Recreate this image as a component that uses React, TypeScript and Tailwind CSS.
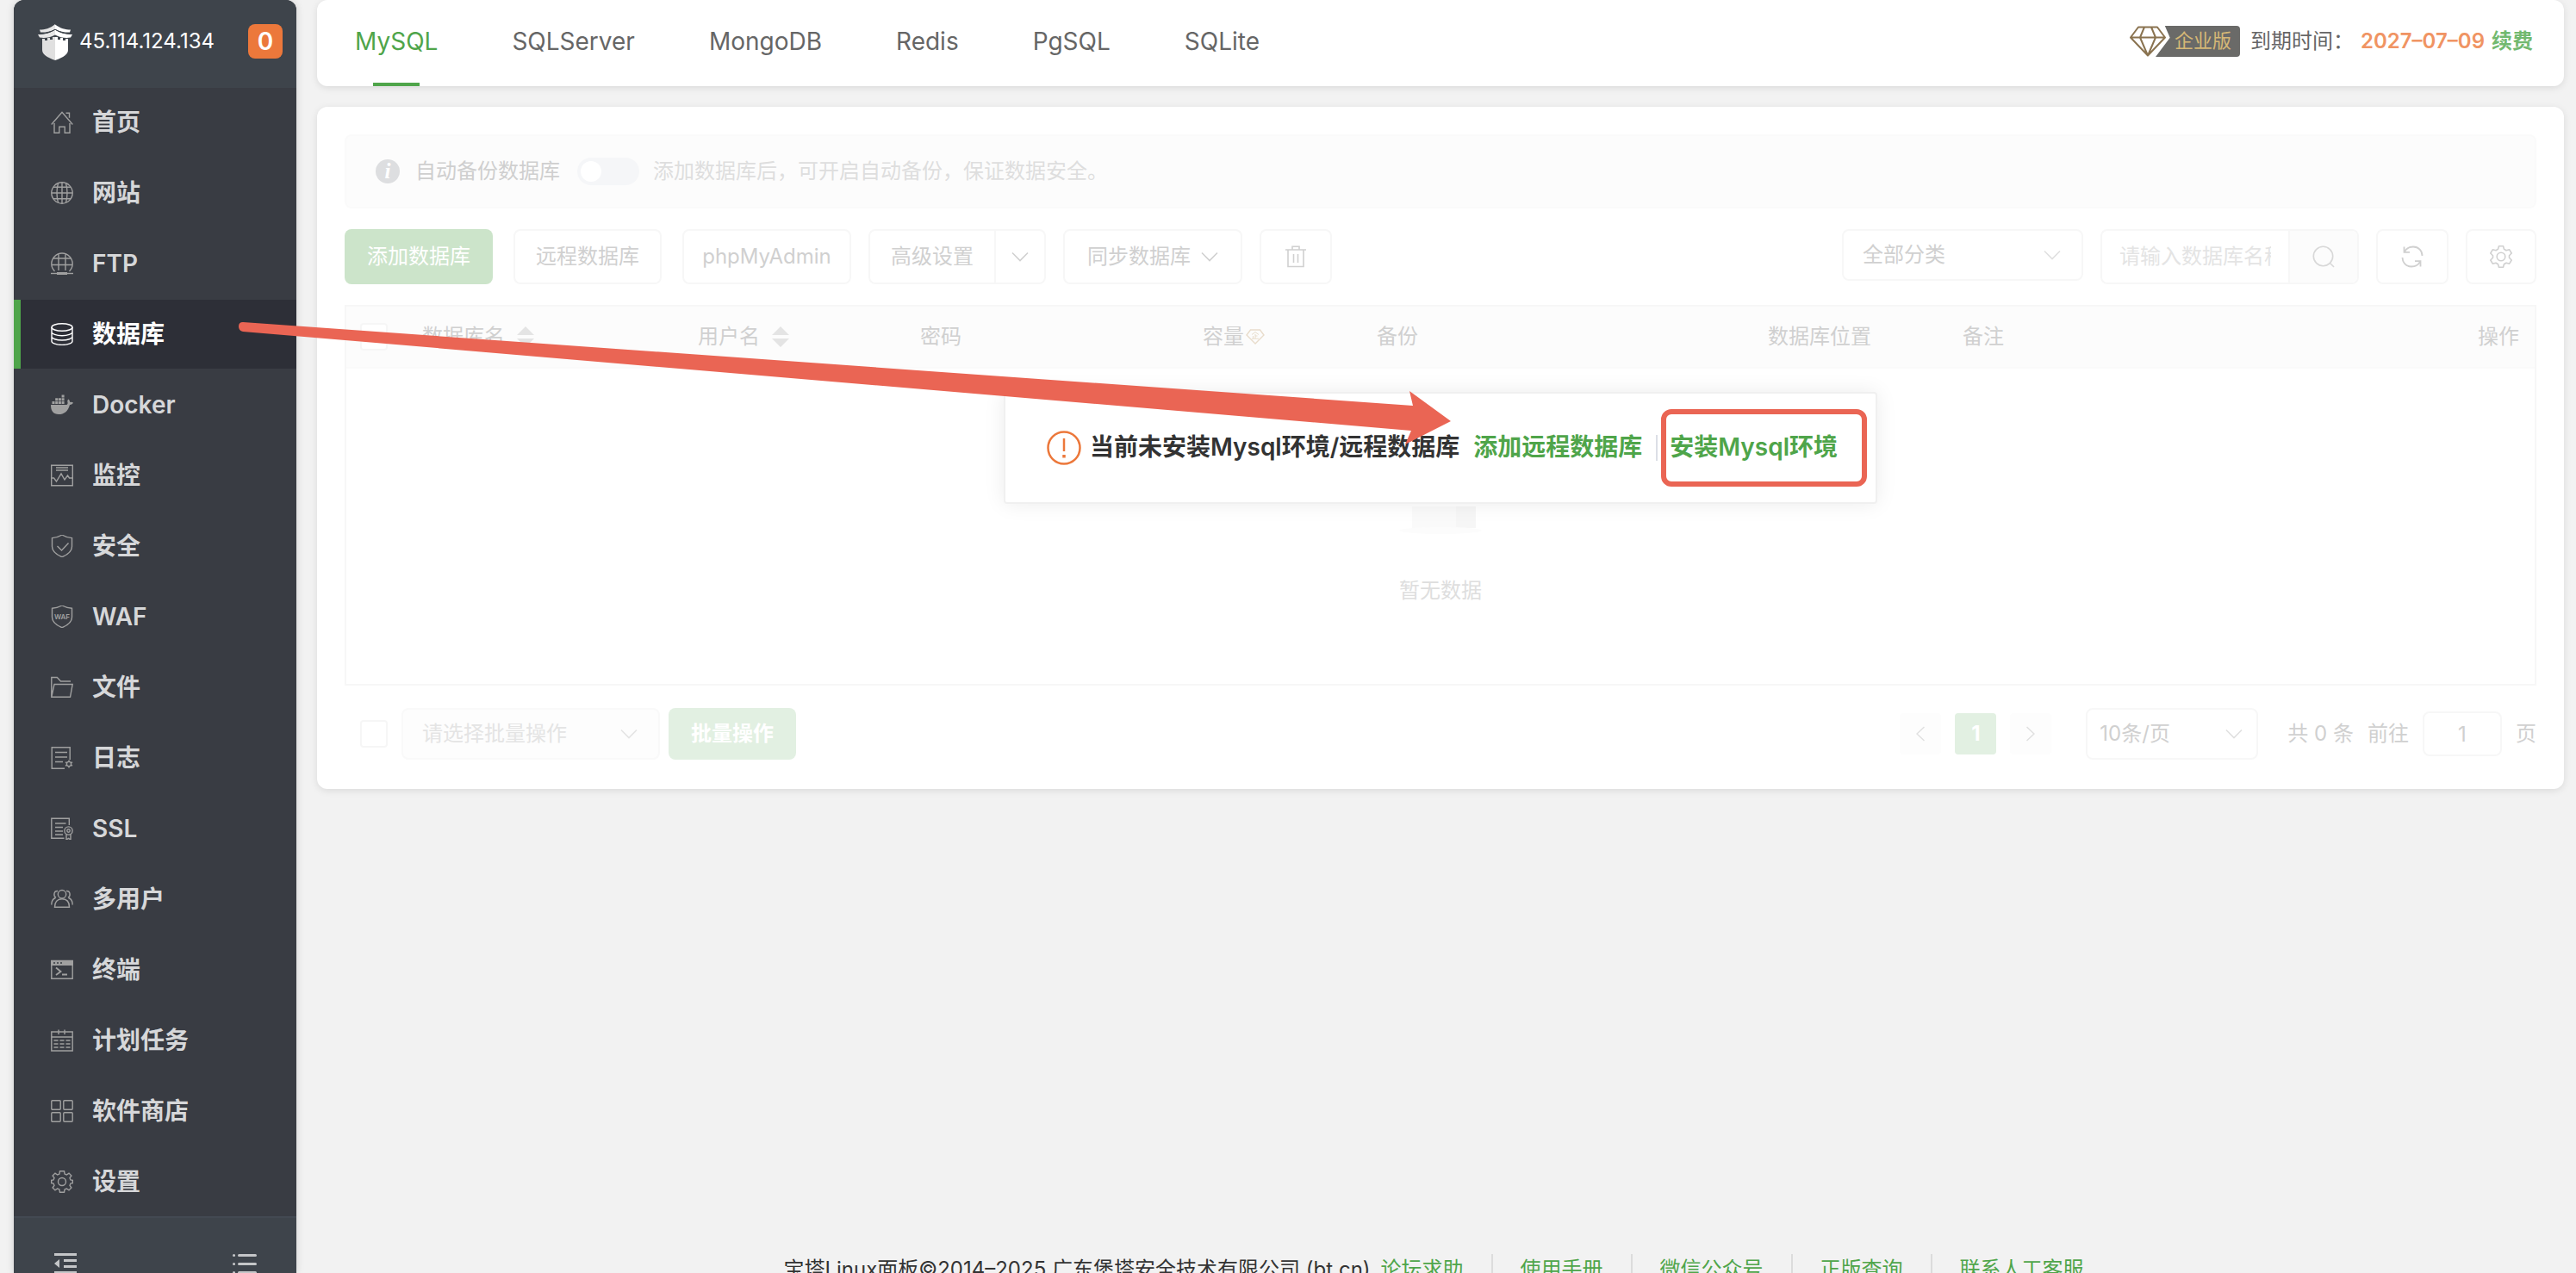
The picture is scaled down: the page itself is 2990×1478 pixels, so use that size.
import React from 'react';
import { clsx } from 'clsx';

interface IconProps {
  className?: string;
}

interface MenuItem {
  label: string;
  icon: React.ReactNode;
  active?: boolean;
}

const tabs = ['MySQL', 'SQLServer', 'MongoDB', 'Redis', 'PgSQL', 'SQLite'];

const footerLinks = ['论坛求助', '使用手册', '微信公众号', '正版查询', '联系人工客服'];

// 26px line icon used in the side menu
const MenuIcon: React.FC<{ children: React.ReactNode }> = ({ children }) => (
  <svg viewBox="0 0 26 26" className="h-[26px] w-[26px] shrink-0" fill="none" stroke="currentColor" strokeWidth="1.4" aria-hidden="true">
    {children}
  </svg>
);

const menu: MenuItem[] = [
  {
    label: '首页',
    icon: (
      <MenuIcon>
        <path d="M.7 15.5 13 1.2l12.3 14.3M17.5 2.2h4v5.6M4 14v11.2h5.8v-7h6.4v7H22V14" />
      </MenuIcon>
    ),
  },
  {
    label: '网站',
    icon: (
      <MenuIcon>
        <circle cx="13" cy="13" r="12.2" />
        <path d="M13 .8v24.4M.8 13h24.4M3 6.3h20M3 19.7h20M8.5 1.8q-3 11.2 0 22.4M17.5 1.8q3 11.2 0 22.4" />
      </MenuIcon>
    ),
  },
  {
    label: 'FTP',
    icon: (
      <MenuIcon>
        <path d="M4.5 22A12.2 12.2 0 1 1 21.500 22M2.500 7h21M1 14.500h24M9 1.500V21M17 1.500V21" />
        <path d="M0 24.500h26" />
        <path d="M7 24.500h12" strokeWidth="3" />
      </MenuIcon>
    ),
  },
  {
    label: '数据库',
    active: true,
    icon: (
      <MenuIcon>
        <ellipse cx="13" cy="5" rx="12" ry="4.200" />
        <path d="M1 5v16.200c0 2.300 5.400 4.200 12 4.200s12-1.900 12-4.200V5M1 10.500c0 2.300 5.400 4.200 12 4.200s12-1.900 12-4.200M1 15.800C1 18.100 6.400 20 13 20s12-1.900 12-4.200" />
      </MenuIcon>
    ),
  },
  {
    label: 'Docker',
    icon: (
      <MenuIcon>
        <g fill="currentColor" stroke="none">
          <path d="M0 13h18.500c1.200-.8 1.300-1.800.9-3.200-.3-1.300 0-2.200 1-3.300 1.200 1 1.700 2 1.700 3.400 1.400-.3 2.800-.1 3.900.5-.7 1.600-2 2.400-4 2.500C19.800 20.600 15.500 24 9 24 3 24 0 20.500 0 13z" />
          <path d="M1.500 9h3v3h-3zM5.200 9h3v3h-3zM8.900 9h3v3h-3zM12.600 9h3v3h-3zM5.200 5.200h3v3h-3zM8.900 5.200h3v3h-3zM12.600 5.200h3v3h-3zM12.600 1.400h3v3h-3z" />
        </g>
      </MenuIcon>
    ),
  },
  {
    label: '监控',
    icon: (
      <MenuIcon>
        <path d="M.7 1.200h24.600v23.600H.7zM6 4h14M6 7h14M1 16h2.500l3 4 5.500-9 4 7 3.500-5 2 3h4" />
      </MenuIcon>
    ),
  },
  {
    label: '安全',
    icon: (
      <MenuIcon>
        <path d="M13 0c3.500 2.300 7.500 3.300 11.500 3.600v9.900c0 5.500-5 9.500-11.500 12.200C6.500 23 1.500 19 1.500 13.500V3.600C5.500 3.300 9.500 2.300 13 0zM7.500 13l5 5 8-8.500" />
      </MenuIcon>
    ),
  },
  {
    label: 'WAF',
    icon: (
      <MenuIcon>
        <path d="M13 0c3.500 2 7.500 3 11.500 3.300v10.200c0 5.500-5 9.500-11.500 12.200C6.500 23 1.500 19 1.500 13.500V3.300C5.500 3 9.500 2 13 0z" />
        <text x="13" y="16" textAnchor="middle" fontSize="8" fontWeight="600" fill="currentColor" stroke="none">
          WAF
        </text>
      </MenuIcon>
    ),
  },
  {
    label: '文件',
    icon: (
      <MenuIcon>
        <path d="M.8 24V1.500h6.500L11.500 6H23M4 9.500h21.200L22.500 24.300H.8z" />
      </MenuIcon>
    ),
  },
  {
    label: '日志',
    icon: (
      <MenuIcon>
        <path d="M16 25.200H1.200V.8h21v14.500M5 6.500h14M5 12h14M5 17.500h9" />
        <circle cx="21" cy="20" r="2.600" />
        <path d="M21 15.500v2M21 22.500v2M17 17.800l1.700 1M23.300 21.200l1.700 1M17 22.200l1.700-1M23.300 18.800l1.700-1" />
      </MenuIcon>
    ),
  },
  {
    label: 'SSL',
    icon: (
      <MenuIcon>
        <path d="M15.500 24.300H.8V1.200h20.500V9M5 7h12.500M5 11.500h9M5 16h9M5 20h9" />
        <circle cx="20.500" cy="15.500" r="4.600" />
        <circle cx="20.500" cy="15.500" r="1.700" />
        <path d="M18 19.500V26l2.500-1.700L23 26v-6.500" />
      </MenuIcon>
    ),
  },
  {
    label: '多用户',
    icon: (
      <MenuIcon>
        <circle cx="13" cy="7.200" r="4.700" />
        <path d="M4.500 22.300c0-6.500 3-9.500 8.500-9.500s8.500 3 8.500 9.500zM8 3.500C3.500 3 2.500 9 6 11M18 3.500c4.500-.5 5.500 5.500 2 7.500M5.500 11.500C2 12.500.8 15.500.8 19.500M20.500 11.500c3.500 1 4.700 4 4.700 8" />
      </MenuIcon>
    ),
  },
  {
    label: '终端',
    icon: (
      <MenuIcon>
        <path d="M.8 2.500h24.400v20.800H.8z" />
        <path d="M0 2h26v6H0z" fill="currentColor" stroke="none" />
        <path d="M3 5h2M7 5h2M11 5h2" stroke="#393c43" />
        <path d="M6 10.500l5.500 4.500L6 19M13 18.500h6" strokeWidth="1.800" />
      </MenuIcon>
    ),
  },
  {
    label: '计划任务',
    icon: (
      <MenuIcon>
        <path d="M.8 3h24.400v22H.8zM.8 9h24.400M9 .5V6M16 .5V6M3.500 13h5M10.500 13h5M17.500 13h5M3.500 17h5M10.500 17h5M17.500 17h5M3.500 21h5M10.500 21h5M17.500 21h5" />
      </MenuIcon>
    ),
  },
  {
    label: '软件商店',
    icon: (
      <MenuIcon>
        <rect x=".8" y=".8" width="10.400" height="10.400" rx="1" />
        <rect x="14.800" y=".8" width="10.400" height="10.400" rx="1" />
        <rect x=".8" y="14.800" width="10.400" height="10.400" rx="1" />
        <rect x="14.800" y="14.800" width="10.400" height="10.400" rx="1" />
      </MenuIcon>
    ),
  },
  {
    label: '设置',
    icon: (
      <MenuIcon>
        <circle cx="13" cy="13" r="4.500" />
        <path d="M10.500.8h5l.6 3.300 2.200.9 2.700-1.900 2.900 2.900L22 8.700l.9 2.200 2.400.4v3.400l-2.400.4-.9 2.200 1.900 2.700-2.900 2.900-2.700-1.900-2.200.9-.6 3.300h-5l-.6-3.300-2.200-.9L5 22.900 2.100 20 4 17.300l-.9-2.200-2.400-.4v-3.400l2.400-.4L4 8.700 2.100 6 5 3.100 7.700 5l2.200-.9z" />
      </MenuIcon>
    ),
  },
];

const Logo: React.FC = () => (
  <svg viewBox="0 0 40 42" className="h-[42px] w-10 shrink-0" aria-hidden="true">
    <path d="M20 0v6C13 9 8 10 3 9.500L2 6.500c6 0 12-1.500 18-6.500zM20 6.500v6C14 16 7 16.500 2 15.500L0 12c8 0 14-1.500 20-5.500z" fill="#e6e6e6" />
    <path d="M20 0v6c7 3 12 4 17 3.500l1-3C32 6.500 26 5 20 .5zM20 6.500v6c6 3.500 13 4 18 3l2-3.500c-8 0-14-1.500-20-5.500z" fill="#fff" />
    <path d="M5 17h3v2h3v-3h3v2h3v-3h3v27C10 38.500 5 35 5 30z" fill="#e0e0e0" />
    <path d="M35 17h-3v2h-3v-3h-3v2h-3v-3h-3v27c10-3.500 15-7 15-12z" fill="#fff" />
    <path d="M1 11c8 .2 13-1.300 19-4.800 6 3.500 11 5 19 4.800" fill="none" stroke="#3e444b" strokeWidth="1" />
  </svg>
);

const ChevronDown: React.FC<IconProps> = ({ className }) => (
  <svg viewBox="0 0 20 12" className={clsx('h-3 w-5 shrink-0', className)} fill="none" stroke="currentColor" strokeWidth="1.6" aria-hidden="true">
    <path d="M1 1.500l9 9 9-9" />
  </svg>
);

const SortIcon: React.FC = () => (
  <svg viewBox="0 0 20 24" className="h-6 w-5 shrink-0 text-[#e4e4e4]" fill="currentColor" aria-hidden="true">
    <path d="M10 0l10 10H0zM10 24L0 14h20z" />
  </svg>
);

const Checkbox: React.FC<{ label: string }> = ({ label }) => (
  <input
    type="checkbox"
    aria-label={label}
    className="block h-8 w-8 shrink-0 appearance-none rounded border-2 border-[#f6f6f6] bg-white"
  />
);

// Outlined toolbar button
const ToolButton: React.FC<React.ButtonHTMLAttributes<HTMLButtonElement>> = ({ className, children, ...rest }) => (
  <button
    type="button"
    className={clsx('flex h-16 items-center justify-center rounded-lg border-2 border-[#f7f7f7] bg-white text-[#d0d0d0]', className)}
    {...rest}
  >
    {children}
  </button>
);

const Sidebar: React.FC = () => (
  <aside className="ml-4 flex w-[328px] shrink-0 flex-col overflow-hidden rounded-t-xl bg-[#393c43] shadow-[0_0_10px_rgba(0,0,0,0.15)]">
    <div className="flex h-[102px] shrink-0 items-start bg-[#3e444b] pt-7 pr-4 pl-7">
      <Logo />
      <span className="ml-2 text-2xl leading-10 text-white">45.114.124.134</span>
      <span className="ml-auto flex h-10 w-10 items-center justify-center rounded-lg bg-[#ec783b] text-[28px] font-semibold text-white">0</span>
    </div>
    <nav className="flex shrink-0 flex-col gap-[2px]">
      {menu.map((item) => (
        <a
          key={item.label}
          href="#"
          className={clsx(
            'flex h-20 items-center gap-[22px] border-l-8 pl-[35px] text-[28px] font-semibold',
            item.active ? 'border-[#4fa54a] bg-[#2d2f37] text-white' : 'border-transparent text-[#d6d7d9]'
          )}
        >
          <span className={item.active ? 'text-white' : 'text-[#a0a0a0]'}>{item.icon}</span>
          {item.label}
        </a>
      ))}
    </nav>
    <div className="flex h-24 shrink-0 items-start justify-between border-t-2 border-[#434952] bg-[#3e444b] pt-10 pr-[46px] pl-[47px] text-[#c4c6c8]">
      <button type="button" aria-label="收起菜单">
        <svg viewBox="0 0 26 26" className="h-[26px] w-[26px]" fill="none" stroke="currentColor" strokeWidth="3">
          <path d="M0 2.500h26M11 9.500h15M11 16.500h15M0 23.500h26" />
          <path d="M6 8v10l-6-5z" fill="currentColor" stroke="none" />
        </svg>
      </button>
      <button type="button" aria-label="菜单设置">
        <svg viewBox="0 0 28 26" className="h-[26px] w-7" fill="none" stroke="currentColor" strokeWidth="3" strokeLinecap="round">
          <path d="M7.500 3.500h19M7.500 13.500h19M7.500 23.500h19M1.500 3.500h.1M1.500 13.500h.1M1.500 23.500h.1" />
        </svg>
      </button>
    </div>
  </aside>
);

const TopBar: React.FC = () => (
  <header className="flex h-[100px] shrink-0 items-stretch rounded-xl bg-white pr-9 shadow-[0_2px_8px_rgba(0,0,0,0.1)]">
    <nav className="flex pl-px">
      {tabs.map((tab, i) => (
        <a
          key={tab}
          href="#"
          className={clsx('flex flex-col items-center px-[43px] pt-7 text-[28px] leading-10', i === 0 ? 'text-[#4fa54a]' : 'text-[#666]')}
        >
          {tab}
          {i === 0 && <span className="mt-auto h-1 w-[54px] bg-[#4fa54a]" />}
        </a>
      ))}
    </nav>
    <div className="ml-auto flex h-24 items-center text-2xl">
      <svg viewBox="0 0 42 36" className="h-9 w-[42px]" fill="none" stroke="#8a7350" strokeWidth="2" strokeLinejoin="round" aria-hidden="true">
        <path d="M10 1.500h22l9 12L21 34.500 1 13.500zM1 13.500h40M17 1.500l-5 12 9 21 9-21-5-12" />
      </svg>
      <span className="-ml-3 flex h-9 items-center rounded-r bg-[#6a6a68] pr-[10px] pl-[22px] text-[22px] text-[#d6b876] [clip-path:polygon(11%_0,100%_0,100%_100%,0_100%,17%_38%)]">
        企业版
      </span>
      <span className="ml-3 text-[#666]">到期时间：</span>
      <span className="ml-2 font-semibold text-[#f09463]">2027–07–09</span>
      <a href="#" className="ml-2 font-bold text-[#72b96f]">
        续费
      </a>
    </div>
  </header>
);

const Toolbar: React.FC = () => (
  <div className="mt-6 flex items-start justify-between">
    <div className="flex">
      <button type="button" className="h-16 rounded-lg bg-[#cce4ca] px-[26px] text-white">
        添加数据库
      </button>
      <ToolButton className="ml-6 px-6">远程数据库</ToolButton>
      <ToolButton className="ml-6 w-[196px]">phpMyAdmin</ToolButton>
      <div className="ml-5 flex">
        <ToolButton className="rounded-r-none px-6">高级设置</ToolButton>
        <ToolButton className="w-[58px] rounded-l-none border-l-0" aria-label="更多高级设置">
          <ChevronDown />
        </ToolButton>
      </div>
      <ToolButton className="ml-5 w-[208px] gap-3">
        同步数据库
        <ChevronDown />
      </ToolButton>
      <ToolButton className="ml-5 w-[84px]" aria-label="回收站">
        <svg viewBox="0 0 26 26" className="h-[26px] w-[26px]" fill="none" stroke="currentColor" strokeWidth="1.600">
          <path d="M1 5h24M9 5V1.200h8V5M4 5v19.500h18V5M10.500 10v10M15.500 10v10" />
        </svg>
      </ToolButton>
    </div>
    <div className="flex gap-5">
      <div className="grid h-[60px] w-[280px] items-center">
        <select
          aria-label="数据库分类"
          className="col-start-1 row-start-1 h-full w-full appearance-none rounded-lg border-2 border-[#f7f7f7] bg-transparent pl-[22px] text-[#d0d0d0]"
        >
          <option>全部分类</option>
        </select>
        <ChevronDown className="pointer-events-none col-start-1 row-start-1 mr-[26px] justify-self-end text-[#e0e0e0]" />
      </div>
      <div className="flex h-16 w-[300px] overflow-hidden rounded-lg border-2 border-[#f7f7f7]">
        <input
          type="text"
          aria-label="搜索数据库"
          placeholder="请输入数据库名称"
          className="min-w-0 flex-1 px-5 placeholder:text-[#e4e4e4]"
        />
        <button type="button" aria-label="搜索" className="flex w-20 items-center justify-center border-l-2 border-[#f7f7f7] bg-[#fcfcfc] text-[#d8d8d8]">
          <svg viewBox="0 0 26 26" className="h-[26px] w-[26px]" fill="none" stroke="currentColor" strokeWidth="1.600">
            <circle cx="12.500" cy="12.500" r="11.200" />
            <path d="M20.500 20.500l4.500 4.500" />
          </svg>
        </button>
      </div>
      <ToolButton className="w-[84px]" aria-label="刷新">
        <svg viewBox="0 0 26 26" className="h-[26px] w-[26px]" fill="none" stroke="currentColor" strokeWidth="1.800">
          <path d="M1.500 14c0 5 3.500 10.500 10.500 10.500 5 0 8.500-2.500 10-6M24.500 12C24.500 6.500 20.500 1.500 14 1.500c-5 0-8.500 2.500-10 6M3.500 1.500v6.300h6.500M22.500 24.500v-6.300H16" />
        </svg>
      </ToolButton>
      <ToolButton className="w-[82px]" aria-label="表格设置">
        <svg viewBox="0 0 26 26" className="h-[26px] w-[26px]" fill="none" stroke="currentColor" strokeWidth="1.600" strokeLinejoin="round">
          <circle cx="13" cy="13" r="4.800" />
          <path d="M10.500.8h5l1 3.500 2.500 1.500 3.700-1 2.500 4.200-2.700 2.700v2.600l2.700 2.700-2.500 4.200-3.700-1-2.500 1.500-1 3.500h-5l-1-3.500L7 20.200l-3.700 1L.8 17l2.700-2.700v-2.600L.8 9l2.500-4.200 3.700 1 2.500-1.500z" />
        </svg>
      </ToolButton>
    </div>
  </div>
);

const DatabaseTable: React.FC = () => (
  <table className="mt-6 w-full table-fixed border-separate border-spacing-0 border-2 border-[#f7f7f7] text-left">
    <colgroup>
      <col className="w-[68px]" />
      <col className="w-[320px]" />
      <col className="w-[258px]" />
      <col className="w-[328px]" />
      <col className="w-[202px]" />
      <col className="w-[454px]" />
      <col className="w-[226px]" />
      <col />
      <col className="w-[160px]" />
    </colgroup>
    <thead>
      <tr className="h-[72px] bg-[#fcfcfc] text-[#d0d0d0] [&>th]:border-b-2 [&>th]:border-[#fafafa] [&>th]:font-normal">
        <th className="pl-4">
          <Checkbox label="全选" />
        </th>
        <th className="px-5">
          <div className="flex items-center gap-[14px]">
            数据库名
            <SortIcon />
          </div>
        </th>
        <th className="px-5">
          <div className="flex items-center gap-[14px]">
            用户名
            <SortIcon />
          </div>
        </th>
        <th className="px-5">密码</th>
        <th className="px-5">
          <div className="flex items-center gap-[2px]">
            容量
            <svg viewBox="0 0 22 18" className="h-[18px] w-[22px]" fill="none" stroke="#e8dccb" strokeWidth="1.400" aria-hidden="true">
              <path d="M5.500 1h11L21 7l-10 10L1 7z" />
              <path d="M7 6.500l4-3 4 3M11 6v5M8.500 8v3M11 8h2.500M7 11.200h8" strokeWidth="1" />
            </svg>
          </div>
        </th>
        <th className="px-5">备份</th>
        <th className="px-5">数据库位置</th>
        <th className="px-5">备注</th>
        <th className="pr-[18px] text-right">操作</th>
      </tr>
    </thead>
    <tbody>
      <tr className="h-[366px]">
        <td colSpan={9} className="text-center align-top text-[#dedede]">
          <svg viewBox="0 0 200 200" className="mx-auto h-[200px] w-[200px]" aria-hidden="true">
            <path d="M67 160h74v25H67z" fill="#fafafa" />
            <path d="M118 160h23v25h-23z" fill="#f6f6f6" />
            <ellipse cx="100" cy="188" rx="48" ry="4" fill="#fcfcfc" />
          </svg>
          <p className="mt-10 leading-9">暂无数据</p>
        </td>
      </tr>
    </tbody>
  </table>
);

const Pagination: React.FC = () => (
  <div className="flex items-center text-[#d0d0d0]">
    <div className="flex gap-4">
      <button type="button" aria-label="上一页" className="flex h-12 w-12 items-center justify-center rounded bg-[#fdfdfd] text-[#e0e0e0]">
        <svg viewBox="0 0 10 18" className="h-[18px] w-[10px]" fill="none" stroke="currentColor" strokeWidth="1.500">
          <path d="M9.500 1L1 9l8.500 8" />
        </svg>
      </button>
      <button type="button" className="h-12 w-12 rounded bg-[#e2f0e2] font-bold text-white">
        1
      </button>
      <button type="button" aria-label="下一页" className="flex h-12 w-12 items-center justify-center rounded bg-[#fdfdfd] text-[#e0e0e0]">
        <svg viewBox="0 0 10 18" className="h-[18px] w-[10px]" fill="none" stroke="currentColor" strokeWidth="1.500">
          <path d="M.5 1L9 9 .5 17" />
        </svg>
      </button>
    </div>
    <div className="ml-10 grid h-[60px] w-[200px] items-center">
      <select
        aria-label="每页条数"
        className="col-start-1 row-start-1 h-full w-full appearance-none rounded-lg border-2 border-[#f7f7f7] bg-transparent pl-[14px]"
      >
        <option>10条/页</option>
      </select>
      <ChevronDown className="pointer-events-none col-start-1 row-start-1 mr-[18px] justify-self-end text-[#e0e0e0]" />
    </div>
    <span className="ml-[34px]">共 0 条</span>
    <label htmlFor="page-jump" className="ml-4">
      前往
    </label>
    <input
      id="page-jump"
      type="text"
      defaultValue="1"
      className="mx-4 h-[52px] w-[92px] rounded-lg border-2 border-[#f7f7f7] text-center"
    />
    <span>页</span>
  </div>
);

const InstallNotice: React.FC = () => (
  <div className="absolute inset-0 flex items-center justify-center">
    <div className="flex h-[130px] items-center rounded border-2 border-[#f0f0f0] bg-white pr-[10px] pl-12 text-[28px] font-semibold text-[#333] shadow-[0_0_24px_rgba(0,0,0,0.08)]">
      <svg viewBox="0 0 40 40" className="h-10 w-10 shrink-0" fill="none" stroke="#ec783b" strokeWidth="2.500" aria-hidden="true">
        <circle cx="20" cy="20" r="18.500" />
        <path d="M20 9v15" />
        <path d="M20 28v3.500" strokeWidth="3.500" />
      </svg>
      <span className="ml-[10px]">当前未安装Mysql环境/远程数据库</span>
      <a href="#" className="ml-4 text-[#4fa54a]">
        添加远程数据库
      </a>
      <span className="ml-4 h-[30px] w-[2px] bg-[#dcdfe6]" />
      <a href="#" className="ml-1 flex h-[90px] items-center rounded-xl border-[6px] border-[#ea6554] pr-7 pl-1 text-[#4fa54a]">
        安装Mysql环境
      </a>
    </div>
  </div>
);

const DatabasePanel: React.FC = () => (
  <section className="relative mt-6 flex shrink-0 flex-col rounded-xl bg-white p-8 pb-[34px] text-2xl shadow-[0_2px_8px_rgba(0,0,0,0.1)]">
    <div className="flex h-[86px] items-center rounded-lg border-2 border-[#fafafa] bg-[#fcfcfc] pl-[34px]">
      <svg viewBox="0 0 28 28" className="h-7 w-7" aria-hidden="true">
        <circle cx="14" cy="14" r="14" fill="#dddee0" />
        <text x="14" y="22" textAnchor="middle" fontSize="25" fontWeight="700" fontStyle="italic" fontFamily="Liberation Serif, serif" fill="#fff">
          i
        </text>
      </svg>
      <label htmlFor="auto-backup" className="ml-[18px] text-[#cfcfcf]">
        自动备份数据库
      </label>
      <input
        id="auto-backup"
        type="checkbox"
        role="switch"
        className="ml-5 h-8 w-[72px] appearance-none rounded-full bg-[#f5f6f8] before:mt-1 before:ml-1 before:block before:h-6 before:w-6 before:rounded-full before:bg-white"
      />
      <span className="ml-4 text-[#dedede]">添加数据库后，可开启自动备份，保证数据安全。</span>
    </div>
    <Toolbar />
    <DatabaseTable />
    <div className="mt-[26px] flex items-center justify-between pl-[18px]">
      <div className="flex items-center">
        <Checkbox label="选择全部数据库" />
        <div className="ml-4 grid h-[60px] w-[300px] items-center">
          <select
            aria-label="批量操作类型"
            className="col-start-1 row-start-1 h-full w-full appearance-none rounded-lg border-2 border-[#f9f9f9] bg-[#fdfdfd] pl-[22px] text-[#e4e4e4]"
          >
            <option>请选择批量操作</option>
          </select>
          <ChevronDown className="pointer-events-none col-start-1 row-start-1 mr-[26px] justify-self-end text-[#e4e4e4]" />
        </div>
        <button type="button" className="ml-[10px] h-[60px] rounded-lg bg-[#e2f0e2] px-[26px] font-semibold text-white">
          批量操作
        </button>
      </div>
      <Pagination />
    </div>
    <InstallNotice />
  </section>
);

const Footer: React.FC = () => (
  <footer className="mt-auto flex h-[22px] shrink-0 items-start justify-center overflow-hidden pr-4 text-2xl leading-9 text-[#333]">
    <span>宝塔Linux面板©2014–2025 广东堡塔安全技术有限公司 (bt.cn)</span>
    <div className="ml-3 flex divide-x-2 divide-[#dcdcdc] text-[#4fa54a] [&>a]:px-8 [&>a:first-child]:pl-0 [&>a:last-child]:pr-0">
      {footerLinks.map((link) => (
        <a key={link} href="#">
          {link}
        </a>
      ))}
    </div>
  </footer>
);

// Red pointer from the side menu to the install notice
const Pointer: React.FC = () => (
  <svg viewBox="0 0 1410 150" className="pointer-events-none absolute top-[370px] left-[276px] h-[150px] w-[1410px]" fill="#ea6554" aria-hidden="true">
    <path d="M6 4Q1 4 1 9t5 6L1362 130l-7 16 53-27-48-35 4 17z" />
  </svg>
);

const App: React.FC = () => {
  return (
    <div className="relative flex h-screen overflow-hidden bg-[#f2f2f2] font-[Inter,'Noto_Sans_CJK_SC',sans-serif]">
      <Sidebar />
      <main className="ml-6 flex min-w-0 flex-1 flex-col pr-[14px]">
        <TopBar />
        <DatabasePanel />
        <Footer />
      </main>
      <Pointer />
    </div>
  );
};

export default App;
